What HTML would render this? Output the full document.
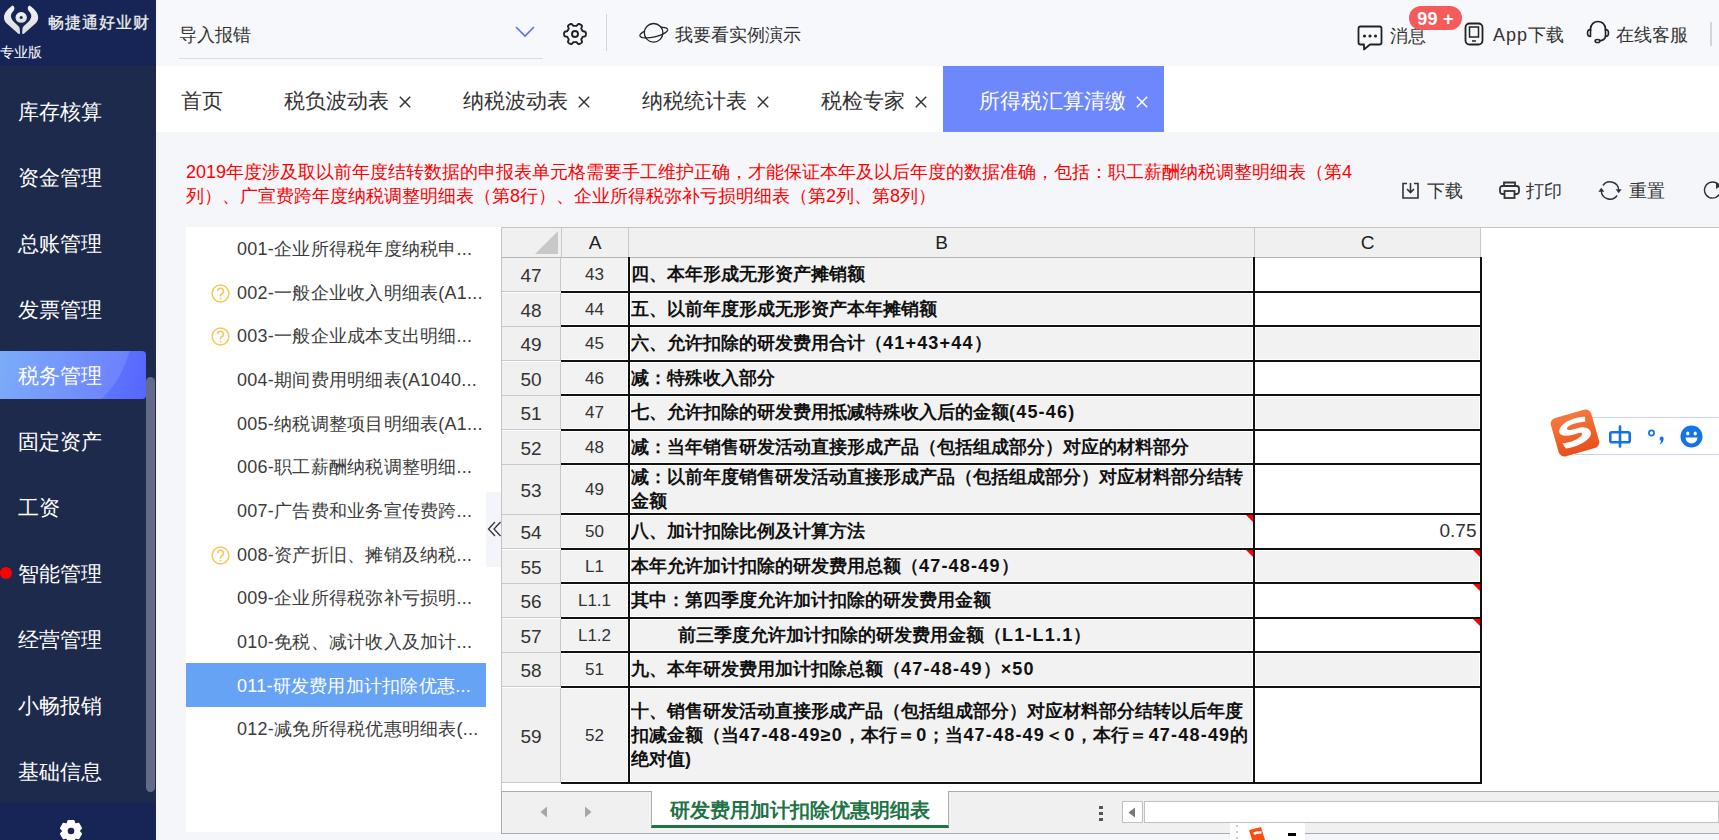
<!DOCTYPE html>
<html><head><meta charset="utf-8">
<style>
*{box-sizing:border-box;margin:0;padding:0}
html,body{width:1719px;height:840px;overflow:hidden;background:#f5f6fa;font-family:"Liberation Sans",sans-serif;color:#333;position:relative}
.abs{position:absolute}
#side{position:absolute;left:0;top:0;width:156px;height:840px;background:#1e2a4c}
#logo{position:absolute;left:0;top:0;width:156px;height:66px;background:#162555}
#sbot{position:absolute;left:0;top:803px;width:156px;height:37px;background:#162555}
.mi{position:absolute;left:18px;color:#fff;font-size:21px;line-height:24px;white-space:nowrap}
#top{position:absolute;left:157px;top:0;width:1562px;height:66px;background:#f7f8fc}
#tabs{position:absolute;left:156px;top:66px;width:1563px;height:66px;background:#fff}
.tab{position:absolute;top:0;height:66px;line-height:70px;font-size:21px;color:#333;white-space:nowrap}
.tx{font-size:18px;line-height:22px;white-space:nowrap;position:absolute;color:#333}
#notice{position:absolute;left:186px;top:160px;width:1190px;color:#f00;font-size:18px;line-height:24px}
#list{position:absolute;left:186px;top:227px;width:315px;height:605px;background:#fff}
.li{position:absolute;left:51px;font-size:18px;line-height:22px;color:#3c3c3c;white-space:nowrap;letter-spacing:0.25px}
.q{position:absolute;left:25px;width:18px;height:18px}
#sheet{position:absolute;left:501px;top:227px;width:1218px;height:606px;background:#fff;border-top:1px solid #c4c4c4;border-left:1px solid #c4c4c4}
#grid{position:absolute;left:0;top:0}#grid > *{position:absolute}
.hd{background:#f0f0f0;border-right:1px solid #c8c8c8;border-bottom:1px solid #b4b4b4}
.ch{text-align:center;font-size:19px;line-height:30px;color:#222}
.rh{left:502px;width:59px;background:#f0f0f0;text-align:center;font-size:19px;color:#333;border-right:1px solid #c8c8c8}
.ca{left:561px;width:67px;background:#f2f2f2;text-align:center;font-size:17px;color:#333}
.cb{left:628px;width:626px;background:#f2f2f2;display:flex;align-items:center}
.bt{padding-left:3px;font-size:18px;line-height:24px;font-weight:bold;color:#111;white-space:nowrap}
.cc{left:1254px;width:226.5px;text-align:right;padding-right:4px;font-size:19px;color:#333}
.hl{left:561px;width:920.5px;height:2px;background:#111}
.rl{left:502px;width:59px;height:1px;background:#c8c8c8}
.vl{top:257px;height:526px;width:2px;background:#111}
.n{letter-spacing:1.2px}
.hlw{left:562px;width:920.5px;height:4px;background:#fff}
.vlw{top:258px;height:524px;width:4px;background:#fff}

</style></head><body>
<div id="side">
  <div id="logo">
    <svg class="abs" style="left:0;top:0" width="45" height="40" viewBox="0 0 45 40"><defs><linearGradient id="lg" x1="0" y1="0" x2="0" y2="1"><stop offset="0" stop-color="#f4f4f6"/><stop offset="1" stop-color="#dcdce0"/></linearGradient></defs><path d="M12.6 5.5 C9 8 4 12 4 17.5 C4 21 6 23 9 25.5 L18.3 33.8 C19.3 34.6 20.2 33.8 20 32 L19.6 28 C19.2 26.5 17 25 14 22 C11.5 19.5 10.5 17 11 15 C11.5 13 13 11.5 14 10 C14.8 8.5 14.5 6 12.6 5.5Z" fill="url(#lg)"/><path d="M 29.6 5.5 C 33.2 8.0 38.2 12.0 38.2 17.5 C 38.2 21.0 36.2 23.0 33.2 25.5 L 23.9 33.8 C 22.9 34.6 22.0 33.8 22.2 32.0 L 22.6 28.0 C 23.0 26.5 25.2 25.0 28.2 22.0 C 30.7 19.5 31.7 17.0 31.2 15.0 C 30.7 13.0 29.2 11.5 28.2 10.0 C 27.4 8.5 27.7 6.0 29.6 5.5 Z" fill="url(#lg)"/><ellipse cx="21.2" cy="17.4" rx="5.7" ry="5.3" fill="url(#lg)"/><circle cx="21.2" cy="17.4" r="1.5" fill="#162555"/></svg>
    <div class="abs" style="left:48px;top:13px;color:#eee;font-size:16px;line-height:20px;letter-spacing:1px;-webkit-text-stroke:0.3px #eee">畅捷通好业财</div>
    <div class="abs" style="left:0;top:44px;color:#fff;font-size:14px;line-height:16px">专业版</div>
  </div>
  <div class="mi" style="top:100px">库存核算</div>
  <div class="mi" style="top:166px">资金管理</div>
  <div class="mi" style="top:232px">总账管理</div>
  <div class="mi" style="top:298px">发票管理</div>
  <div class="abs" style="left:0;top:351px;width:146px;height:48px;border-radius:0 4px 4px 0;overflow:hidden;background:linear-gradient(100deg,#6aa2f8 0%,#5f80fd 55%,#5766ff 100%)">
    <div class="abs" style="left:-73px;top:-129px;width:206px;height:206px;border-radius:50%;background:rgba(255,255,255,0.12)"></div>
  </div>
  <div class="mi" style="top:364px">税务管理</div>
  <div class="mi" style="top:430px">固定资产</div>
  <div class="mi" style="top:496px">工资</div>
  <div class="abs" style="left:0;top:567px;width:12px;height:12px;border-radius:50%;background:#f00"></div>
  <div class="mi" style="top:562px">智能管理</div>
  <div class="mi" style="top:628px">经营管理</div>
  <div class="mi" style="top:694px">小畅报销</div>
  <div class="mi" style="top:760px">基础信息</div>
  <div class="abs" style="left:146px;top:377px;width:9px;height:415px;border-radius:5px;background:#646b86"></div>
  <div id="sbot">
    <svg class="abs" style="left:58.5px;top:15.5px" width="24" height="24" viewBox="0 0 24 24"><path fill="#fff" stroke="#fff" stroke-width="1.6" stroke-linejoin="round" fill-rule="evenodd" d="M9.27 1.76 L14.73 1.76 L15.84 4.98 L16.16 5.17 L19.51 4.52 L22.23 9.24 L20.00 11.81 L20.00 12.19 L22.23 14.76 L19.51 19.48 L16.16 18.83 L15.84 19.02 L14.73 22.24 L9.27 22.24 L8.16 19.02 L7.84 18.83 L4.49 19.48 L1.77 14.76 L4.00 12.19 L4.00 11.81 L1.77 9.24 L4.49 4.52 L7.84 5.17 L8.16 4.98Z"/><circle cx="12" cy="12" r="3.3" fill="#162555"/></svg>
  </div>
</div>
<div id="top">
  <div class="tx" style="left:22px;top:24px">导入报错</div>
  <div class="abs" style="left:22px;top:58px;width:364px;height:1px;background:#dcdcdc"></div>
  <svg class="abs" style="left:358px;top:26px" width="20" height="12" viewBox="0 0 20 12"><path d="M1 1 L10 10 L19 1" fill="none" stroke="#5c6cfa" stroke-width="1.6"/></svg>
  <svg class="abs" style="left:406px;top:22px" width="24" height="24" viewBox="0 0 24 24"><path fill="none" stroke="#222" stroke-width="1.9" stroke-linejoin="round" d="M22.90 12.00 L22.89 12.48 L22.85 12.95 L22.76 13.42 L22.59 13.87 L22.13 14.25 L21.18 14.46 L20.23 14.59 L19.75 14.82 L19.52 15.12 L19.35 15.43 L19.19 15.74 L19.01 16.05 L18.83 16.35 L18.64 16.65 L18.46 16.96 L18.32 17.30 L18.36 17.83 L18.72 18.72 L19.01 19.65 L18.91 20.23 L18.61 20.61 L18.25 20.92 L17.86 21.19 L17.45 21.44 L17.03 21.67 L16.60 21.87 L16.16 22.03 L15.68 22.10 L15.12 21.89 L14.46 21.18 L13.87 20.42 L13.43 20.13 L13.06 20.07 L12.71 20.08 L12.35 20.09 L12.00 20.10 L11.65 20.09 L11.29 20.08 L10.94 20.07 L10.57 20.13 L10.13 20.42 L9.54 21.18 L8.88 21.89 L8.32 22.10 L7.84 22.03 L7.40 21.87 L6.97 21.67 L6.55 21.44 L6.14 21.19 L5.75 20.92 L5.39 20.61 L5.09 20.23 L4.99 19.65 L5.28 18.72 L5.64 17.83 L5.68 17.30 L5.54 16.96 L5.36 16.65 L5.17 16.35 L4.99 16.05 L4.81 15.74 L4.65 15.43 L4.48 15.12 L4.25 14.82 L3.77 14.59 L2.82 14.46 L1.87 14.25 L1.41 13.87 L1.24 13.42 L1.15 12.95 L1.11 12.48 L1.10 12.00 L1.11 11.52 L1.15 11.05 L1.24 10.58 L1.41 10.13 L1.87 9.75 L2.82 9.54 L3.77 9.41 L4.25 9.18 L4.48 8.88 L4.65 8.57 L4.81 8.26 L4.99 7.95 L5.17 7.65 L5.36 7.35 L5.54 7.04 L5.68 6.70 L5.64 6.17 L5.28 5.28 L4.99 4.35 L5.09 3.77 L5.39 3.39 L5.75 3.08 L6.14 2.81 L6.55 2.56 L6.97 2.33 L7.40 2.13 L7.84 1.97 L8.32 1.90 L8.88 2.11 L9.54 2.82 L10.13 3.58 L10.57 3.87 L10.94 3.93 L11.29 3.92 L11.65 3.91 L12.00 3.90 L12.35 3.91 L12.71 3.92 L13.06 3.93 L13.43 3.87 L13.87 3.58 L14.46 2.82 L15.12 2.11 L15.68 1.90 L16.16 1.97 L16.60 2.13 L17.03 2.33 L17.45 2.56 L17.86 2.81 L18.25 3.08 L18.61 3.39 L18.91 3.77 L19.01 4.35 L18.72 5.28 L18.36 6.17 L18.32 6.70 L18.46 7.04 L18.64 7.35 L18.83 7.65 L19.01 7.95 L19.19 8.26 L19.35 8.57 L19.52 8.88 L19.75 9.18 L20.23 9.41 L21.18 9.54 L22.13 9.75 L22.59 10.13 L22.76 10.58 L22.85 11.05 L22.89 11.52Z"/><circle cx="12" cy="12" r="3.0" fill="none" stroke="#222" stroke-width="1.9"/></svg>
  <div class="abs" style="left:449px;top:14px;width:1px;height:37px;background:#d4d4d4"></div>
  <svg class="abs" style="left:481px;top:20px" width="32" height="26" viewBox="0 0 32 26"><defs><mask id="pm"><rect width="32" height="26" fill="#fff"/><circle cx="15.6" cy="12.8" r="9.3" fill="#000"/></mask></defs><circle cx="15.6" cy="12.8" r="9.3" fill="none" stroke="#222" stroke-width="1.3"/><g transform="rotate(-13 15.8 12.6)"><path d="M1.6 12.6A14.2 4.4 0 0 0 30 12.6" fill="none" stroke="#222" stroke-width="1.3"/><path d="M1.6 12.6A14.2 4.4 0 0 1 30 12.6" fill="none" stroke="#222" stroke-width="1.3" mask="url(#pm)"/></g></svg>
  <div class="tx" style="left:518px;top:24px">我要看实例演示</div>
  <svg class="abs" style="left:1200px;top:25px" width="26" height="26" viewBox="0 0 26 26"><path d="M3.5 1.5H22.5Q24.5 1.5 24.5 3.5V17.5Q24.5 19.5 22.5 19.5H13L7 24.5V19.5H3.5Q1.5 19.5 1.5 17.5V3.5Q1.5 1.5 3.5 1.5Z" fill="none" stroke="#222" stroke-width="1.8" stroke-linejoin="round"/><circle cx="7.5" cy="11" r="1.6" fill="#222"/><circle cx="13" cy="11" r="1.6" fill="#222"/><circle cx="18.5" cy="11" r="1.6" fill="#222"/></svg>
  <div class="tx" style="left:1233px;top:25px">消息</div>
  <div class="abs" style="left:1252px;top:6px;width:53px;height:24px;border-radius:12px;background:#f55b5b;color:#fff;font-weight:bold;font-size:18px;line-height:26px;text-align:center;letter-spacing:0.3px">99 +</div>
  <svg class="abs" style="left:1307px;top:22px" width="20" height="24" viewBox="0 0 20 24"><rect x="1.5" y="1.5" width="17" height="21" rx="4" fill="none" stroke="#222" stroke-width="1.8"/><rect x="5.5" y="5" width="9" height="10" fill="none" stroke="#222" stroke-width="1.5"/><path d="M8 19h4" stroke="#222" stroke-width="1.5"/></svg>
  <div class="tx" style="left:1336px;top:24px"><span style="letter-spacing:1px">App</span>下载</div>
  <svg class="abs" style="left:1429px;top:19px" width="24" height="26" viewBox="0 0 24 26"><path d="M4.5 12V10A7.5 7.5 0 0 1 19.5 10V12" fill="none" stroke="#222" stroke-width="1.7"/><path d="M4.5 10.5A3 3.5 0 0 0 4.5 17.5Z" fill="none" stroke="#222" stroke-width="1.6" stroke-linejoin="round"/><path d="M19.5 10.5A3 3.5 0 0 1 19.5 17.5Z" fill="none" stroke="#222" stroke-width="1.6" stroke-linejoin="round"/><path d="M19.5 17.5C19 20 16.5 21.5 13.5 21.8" fill="none" stroke="#222" stroke-width="1.6"/><ellipse cx="11.5" cy="22" rx="2.4" ry="1.6" fill="none" stroke="#222" stroke-width="1.5"/></svg>
  <div class="tx" style="left:1459px;top:24px">在线客服</div>
  <div class="abs" style="left:1553px;top:22px;width:2px;height:24px;background:#d4d4d4"></div>
</div>
<div id="tabs">
  <div class="tab" style="left:25px">首页</div>
  <div class="tab" style="left:128px">税负波动表</div>
  <div class="tab" style="left:307px">纳税波动表</div>
  <div class="tab" style="left:486px">纳税统计表</div>
  <div class="tab" style="left:665px">税检专家</div>
  <div class="abs" style="left:787px;top:0;width:221px;height:66px;background:#6d88fc"></div>
  <div class="tab" style="left:823px;color:#fff">所得税汇算清缴</div>
  <svg class="abs" style="left:243px;top:30px" width="12" height="12" viewBox="0 0 12 12"><path d="M0.8 0.8L11.2 11.2M11.2 0.8L0.8 11.2" stroke="#333" stroke-width="1.5"/></svg><svg class="abs" style="left:422px;top:30px" width="12" height="12" viewBox="0 0 12 12"><path d="M0.8 0.8L11.2 11.2M11.2 0.8L0.8 11.2" stroke="#333" stroke-width="1.5"/></svg><svg class="abs" style="left:601px;top:30px" width="12" height="12" viewBox="0 0 12 12"><path d="M0.8 0.8L11.2 11.2M11.2 0.8L0.8 11.2" stroke="#333" stroke-width="1.5"/></svg><svg class="abs" style="left:759px;top:30px" width="12" height="12" viewBox="0 0 12 12"><path d="M0.8 0.8L11.2 11.2M11.2 0.8L0.8 11.2" stroke="#333" stroke-width="1.5"/></svg><svg class="abs" style="left:980px;top:30px" width="12" height="12" viewBox="0 0 12 12"><path d="M0.8 0.8L11.2 11.2M11.2 0.8L0.8 11.2" stroke="#fff" stroke-width="1.5"/></svg>
</div>
<div id="notice">2019年度涉及取以前年度结转数据的申报表单元格需要手工维护正确，才能保证本年及以后年度的数据准确，包括：职工薪酬纳税调整明细表（第4列）、广宣费跨年度纳税调整明细表（第8行）、企业所得税弥补亏损明细表（第2列、第8列）</div>
<svg class="abs" style="left:1402px;top:182px" width="17" height="17" viewBox="0 0 17 17"><path d="M5 1.5H1v14.5h15V1.5h-4" fill="none" stroke="#333" stroke-width="1.6"/><path d="M8.5 1v9M5 7l3.5 3.5L12 7" fill="none" stroke="#333" stroke-width="1.6"/></svg>
<svg class="abs" style="left:1499px;top:181px" width="21" height="18" viewBox="0 0 21 18"><path d="M5 5V1.5h11V5" fill="none" stroke="#333" stroke-width="1.8"/><path d="M5 13H3.5A2.5 2.5 0 0 1 1 10.5V7.5A2.5 2.5 0 0 1 3.5 5h14A2.5 2.5 0 0 1 20 7.5v3A2.5 2.5 0 0 1 17.5 13H16" fill="none" stroke="#333" stroke-width="1.8"/><rect x="5.5" y="10" width="10" height="7" fill="none" stroke="#333" stroke-width="1.8"/></svg>
<svg class="abs" style="left:1598px;top:181px" width="24" height="20" viewBox="0 0 24 20"><path d="M4.9 4.5A8.7 8.7 0 0 1 20.7 9.5" fill="none" stroke="#333" stroke-width="1.4"/><path d="M19.1 14.5A8.7 8.7 0 0 1 3.3 9.5" fill="none" stroke="#333" stroke-width="1.4"/><path d="M17.7 8.3H23.7L20.7 12.3z" fill="#333"/><path d="M0.3 10.7H6.3L3.3 6.7z" fill="#333"/></svg>
<svg class="abs" style="left:1702px;top:181px" width="22" height="20" viewBox="0 0 22 20"><path d="M18.2 7A8 8 0 1 1 14.5 2.2" fill="none" stroke="#333" stroke-width="1.4"/><path d="M14 0.8L19.5 4.5 14 8z" fill="#333"/></svg>
<div class="tx" style="left:1427px;top:180px">下载</div>
<div class="tx" style="left:1526px;top:180px">打印</div>
<div class="tx" style="left:1629px;top:180px">重置</div>
<div id="list">
  <div class="li" style="top:11px">001-企业所得税年度纳税申...</div>
  <svg class="abs" style="left:25px;top:57px" width="19" height="19" viewBox="0 0 19 19"><circle cx="9.5" cy="9.5" r="8.4" fill="none" stroke="#f5c85a" stroke-width="1.5"/><path d="M6.6 7.2A2.9 2.9 0 1 1 10.3 10C9.6 10.4 9.5 10.9 9.5 11.8V12.5" fill="none" stroke="#f5c85a" stroke-width="1.5"/><circle cx="9.5" cy="14.6" r="0.95" fill="#f5c85a"/></svg><div class="li" style="top:55px">002-一般企业收入明细表(A1...</div>
  <svg class="abs" style="left:25px;top:100px" width="19" height="19" viewBox="0 0 19 19"><circle cx="9.5" cy="9.5" r="8.4" fill="none" stroke="#f5c85a" stroke-width="1.5"/><path d="M6.6 7.2A2.9 2.9 0 1 1 10.3 10C9.6 10.4 9.5 10.9 9.5 11.8V12.5" fill="none" stroke="#f5c85a" stroke-width="1.5"/><circle cx="9.5" cy="14.6" r="0.95" fill="#f5c85a"/></svg><div class="li" style="top:98px">003-一般企业成本支出明细...</div>
  <div class="li" style="top:142px">004-期间费用明细表(A1040...</div>
  <div class="li" style="top:186px">005-纳税调整项目明细表(A1...</div>
  <div class="li" style="top:229px">006-职工薪酬纳税调整明细...</div>
  <div class="li" style="top:273px">007-广告费和业务宣传费跨...</div>
  <svg class="abs" style="left:25px;top:319px" width="19" height="19" viewBox="0 0 19 19"><circle cx="9.5" cy="9.5" r="8.4" fill="none" stroke="#f5c85a" stroke-width="1.5"/><path d="M6.6 7.2A2.9 2.9 0 1 1 10.3 10C9.6 10.4 9.5 10.9 9.5 11.8V12.5" fill="none" stroke="#f5c85a" stroke-width="1.5"/><circle cx="9.5" cy="14.6" r="0.95" fill="#f5c85a"/></svg><div class="li" style="top:317px">008-资产折旧、摊销及纳税...</div>
  <div class="li" style="top:360px">009-企业所得税弥补亏损明...</div>
  <div class="li" style="top:404px">010-免税、减计收入及加计...</div>
  <div class="abs" style="left:0;top:436px;width:300px;height:44px;background:#66a3f5"></div>
  <div class="li" style="top:448px;color:#fff">011-研发费用加计扣除优惠...</div>
  <div class="li" style="top:491px">012-减免所得税优惠明细表(...</div>
</div>
<div class="abs" style="left:486px;top:492px;width:15px;height:75px;background:#f3f5fa"></div><svg class="abs" style="left:487px;top:521px" width="14" height="16" viewBox="0 0 14 16"><path d="M8 1L1.5 8L8 15M13.5 1L7 8L13.5 15" fill="none" stroke="#333" stroke-width="1.3"/></svg>
<div id="sheet"></div>
<div id="grid"><div class="rh" style="top:258px;height:33.5px;line-height:35.5px">47</div>
<div class="ca" style="top:257px;height:34.5px;line-height:36.5px">43</div>
<div class="cb" style="top:257px;height:34.5px"><div class="bt">四、本年形成无形资产摊销额</div></div>
<div class="cc" style="top:257px;height:34.5px;line-height:34.5px;background:#fff"></div>
<div class="rh" style="top:292.5px;height:33.5px;line-height:35.5px">48</div>
<div class="ca" style="top:291.5px;height:34.5px;line-height:36.5px">44</div>
<div class="cb" style="top:291.5px;height:34.5px"><div class="bt">五、以前年度形成无形资产本年摊销额</div></div>
<div class="cc" style="top:291.5px;height:34.5px;line-height:34.5px;background:#fff"></div>
<div class="rh" style="top:327px;height:33.5px;line-height:35.5px">49</div>
<div class="ca" style="top:326px;height:34.5px;line-height:36.5px">45</div>
<div class="cb" style="top:326px;height:34.5px"><div class="bt">六、允许扣除的研发费用合计（<span class="n">41+43+44</span>）</div></div>
<div class="cc" style="top:326px;height:34.5px;line-height:34.5px;background:#f2f2f2"></div>
<div class="rh" style="top:361.5px;height:33.5px;line-height:35.5px">50</div>
<div class="ca" style="top:360.5px;height:34.5px;line-height:36.5px">46</div>
<div class="cb" style="top:360.5px;height:34.5px"><div class="bt">减：特殊收入部分</div></div>
<div class="cc" style="top:360.5px;height:34.5px;line-height:34.5px;background:#fff"></div>
<div class="rh" style="top:396px;height:33.5px;line-height:35.5px">51</div>
<div class="ca" style="top:395px;height:34.5px;line-height:36.5px">47</div>
<div class="cb" style="top:395px;height:34.5px"><div class="bt">七、允许扣除的研发费用抵减特殊收入后的金额<span class="n">(45-46)</span></div></div>
<div class="cc" style="top:395px;height:34.5px;line-height:34.5px;background:#f2f2f2"></div>
<div class="rh" style="top:430.5px;height:33.5px;line-height:35.5px">52</div>
<div class="ca" style="top:429.5px;height:34.5px;line-height:36.5px">48</div>
<div class="cb" style="top:429.5px;height:34.5px"><div class="bt">减：当年销售研发活动直接形成产品（包括组成部分）对应的材料部分</div></div>
<div class="cc" style="top:429.5px;height:34.5px;line-height:34.5px;background:#fff"></div>
<div class="rh" style="top:465px;height:49px;line-height:51px">53</div>
<div class="ca" style="top:464px;height:50px;line-height:52px">49</div>
<div class="cb" style="top:464px;height:50px"><div class="bt">减：以前年度销售研发活动直接形成产品（包括组成部分）对应材料部分结转<br>金额</div></div>
<div class="cc" style="top:464px;height:50px;line-height:50px;background:#fff"></div>
<div class="rh" style="top:515px;height:33.5px;line-height:35.5px">54</div>
<div class="ca" style="top:514px;height:34.5px;line-height:36.5px">50</div>
<div class="cb" style="top:514px;height:34.5px"><div class="bt">八、加计扣除比例及计算方法</div></div>
<div class="cc" style="top:514px;height:34.5px;line-height:34.5px;background:#fff">0.75</div>
<div class="rh" style="top:549.5px;height:33.5px;line-height:35.5px">55</div>
<div class="ca" style="top:548.5px;height:34.5px;line-height:36.5px">L1</div>
<div class="cb" style="top:548.5px;height:34.5px"><div class="bt">本年允许加计扣除的研发费用总额（<span class="n">47-48-49</span>）</div></div>
<div class="cc" style="top:548.5px;height:34.5px;line-height:34.5px;background:#f2f2f2"></div>
<div class="rh" style="top:584px;height:33.5px;line-height:35.5px">56</div>
<div class="ca" style="top:583px;height:34.5px;line-height:36.5px">L1.1</div>
<div class="cb" style="top:583px;height:34.5px"><div class="bt">其中：第四季度允许加计扣除的研发费用金额</div></div>
<div class="cc" style="top:583px;height:34.5px;line-height:34.5px;background:#fff"></div>
<div class="rh" style="top:618.5px;height:33.5px;line-height:35.5px">57</div>
<div class="ca" style="top:617.5px;height:34.5px;line-height:36.5px">L1.2</div>
<div class="cb" style="top:617.5px;height:34.5px"><div class="bt" style="padding-left:50px">前三季度允许加计扣除的研发费用金额（<span class="n">L1-L1.1</span>）</div></div>
<div class="cc" style="top:617.5px;height:34.5px;line-height:34.5px;background:#fff"></div>
<div class="rh" style="top:653px;height:33.5px;line-height:35.5px">58</div>
<div class="ca" style="top:652px;height:34.5px;line-height:36.5px">51</div>
<div class="cb" style="top:652px;height:34.5px"><div class="bt">九、本年研发费用加计扣除总额（<span class="n">47-48-49</span>）<span class="n">×50</span></div></div>
<div class="cc" style="top:652px;height:34.5px;line-height:34.5px;background:#f2f2f2"></div>
<div class="rh" style="top:687.5px;height:95.0px;line-height:97.0px">59</div>
<div class="ca" style="top:686.5px;height:96.0px;line-height:98.0px">52</div>
<div class="cb" style="top:686.5px;height:96.0px"><div class="bt">十、销售研发活动直接形成产品（包括组成部分）对应材料部分结转以后年度<br>扣减金额（当<span class="n">47-48-49≥0</span>，本行<span class="n">＝0</span>；当<span class="n">47-48-49＜0</span>，本行<span class="n">＝47-48-49</span>的<br>绝对值<span class="n">)</span></div></div>
<div class="cc" style="top:686.5px;height:96.0px;line-height:96.0px;background:#fff"></div>
<div class="hd" style="left:502px;top:228px;width:60px;height:30px"></div>
<svg class="abs" style="left:535px;top:231px" width="23" height="23"><polygon points="23,0 23,23 0,23" fill="#c8c8c8"/></svg>
<div class="hd ch" style="left:562px;top:228px;width:67px;height:30px">A</div>
<div class="hd ch" style="left:629px;top:228px;width:626px;height:30px">B</div>
<div class="hd ch" style="left:1255px;top:228px;width:226px;height:30px">C</div>
<div class="hlw" style="top:289.5px"></div>
<div class="hlw" style="top:324px"></div>
<div class="hlw" style="top:358.5px"></div>
<div class="hlw" style="top:393px"></div>
<div class="hlw" style="top:427.5px"></div>
<div class="hlw" style="top:462px"></div>
<div class="hlw" style="top:512px"></div>
<div class="hlw" style="top:546.5px"></div>
<div class="hlw" style="top:581px"></div>
<div class="hlw" style="top:615.5px"></div>
<div class="hlw" style="top:650px"></div>
<div class="hlw" style="top:684.5px"></div>
<div class="hlw" style="top:780.5px"></div>
<div class="vlw" style="left:627px"></div>
<div class="vlw" style="left:1252px"></div>
<div class="vlw" style="left:1479px"></div>
<div class="hl" style="top:290.5px"></div>
<div class="rl" style="top:291.0px"></div>
<div class="hl" style="top:325px"></div>
<div class="rl" style="top:325.5px"></div>
<div class="hl" style="top:359.5px"></div>
<div class="rl" style="top:360.0px"></div>
<div class="hl" style="top:394px"></div>
<div class="rl" style="top:394.5px"></div>
<div class="hl" style="top:428.5px"></div>
<div class="rl" style="top:429.0px"></div>
<div class="hl" style="top:463px"></div>
<div class="rl" style="top:463.5px"></div>
<div class="hl" style="top:513px"></div>
<div class="rl" style="top:513.5px"></div>
<div class="hl" style="top:547.5px"></div>
<div class="rl" style="top:548.0px"></div>
<div class="hl" style="top:582px"></div>
<div class="rl" style="top:582.5px"></div>
<div class="hl" style="top:616.5px"></div>
<div class="rl" style="top:617.0px"></div>
<div class="hl" style="top:651px"></div>
<div class="rl" style="top:651.5px"></div>
<div class="hl" style="top:685.5px"></div>
<div class="rl" style="top:686.0px"></div>
<div class="hl" style="top:781.5px"></div>
<div class="rl" style="top:782.0px"></div>
<div class="vl" style="left:628px"></div>
<div class="vl" style="left:1253px"></div>
<div class="vl" style="left:1480px"></div>
<svg class="abs" style="left:1246px;top:515px" width="7" height="7"><polygon points="0,0 7,0 7,7" fill="#f00"/></svg>
<svg class="abs" style="left:1246px;top:549.5px" width="7" height="7"><polygon points="0,0 7,0 7,7" fill="#f00"/></svg>
<svg class="abs" style="left:1472.5px;top:549.5px" width="7" height="7"><polygon points="0,0 7,0 7,7" fill="#f00"/></svg>
<svg class="abs" style="left:1472.5px;top:584px" width="7" height="7"><polygon points="0,0 7,0 7,7" fill="#f00"/></svg>
<svg class="abs" style="left:1472.5px;top:618.5px" width="7" height="7"><polygon points="0,0 7,0 7,7" fill="#f00"/></svg></div>
<div class="abs" style="left:501px;top:791px;width:1218px;height:43px;background:#f0f0f0;border-top:1px solid #ababab;border-bottom:1px solid #ababab;border-left:1px solid #ababab"></div>
<svg class="abs" style="left:540px;top:806px" width="8" height="12" viewBox="0 0 8 12"><path d="M7 0.5V11.5L0.5 6z" fill="#a6a6a6"/></svg>
<svg class="abs" style="left:584px;top:806px" width="8" height="12" viewBox="0 0 8 12"><path d="M1 0.5V11.5L7.5 6z" fill="#a6a6a6"/></svg>
<div class="abs" style="left:651px;top:791px;width:298px;height:37px;background:#fff;border-left:1px solid #ababab;border-right:1px solid #ababab;border-bottom:3px solid #217346"></div>
<div class="abs" style="left:651px;top:798px;width:298px;text-align:center;font-size:20px;line-height:24px;font-weight:bold;color:#217346;white-space:nowrap">研发费用加计扣除优惠明细表</div>
<div class="abs" style="left:1099px;top:806px;width:3.5px;height:3px;background:#555"></div>
<div class="abs" style="left:1099px;top:812px;width:3.5px;height:3px;background:#555"></div>
<div class="abs" style="left:1099px;top:818px;width:3.5px;height:3px;background:#555"></div>
<div class="abs" style="left:1122px;top:801px;width:21px;height:22px;background:#fff;border:1px solid #c0c0c0"></div>
<svg class="abs" style="left:1128px;top:807px" width="8" height="11" viewBox="0 0 8 11"><path d="M7 0.5V10.5L0.5 5.5z" fill="#777"/></svg>
<div class="abs" style="left:1144px;top:801px;width:575px;height:22px;background:#fff;border:1px solid #c0c0c0"></div>
<div class="abs" style="left:1230px;top:823px;width:75px;height:17px;background:#fff"></div>
<div class="abs" style="left:1236px;top:825px;width:2px;height:2px;background:#ccc"></div>
<div class="abs" style="left:1236px;top:831px;width:2px;height:2px;background:#ccc"></div>
<div class="abs" style="left:1236px;top:837px;width:2px;height:2px;background:#ccc"></div>
<svg class="abs" style="left:1247px;top:826px" width="26" height="14" viewBox="0 0 26 14"><path d="M2 4L14 1L18 14H5z" fill="#ff4d10"/><path d="M6 7C8 5 12 5 15 5.5L14 8C12 7.6 9 8 8 9Z" fill="#fff"/></svg>
<div class="abs" style="left:1288px;top:833px;width:8px;height:3px;background:#000"></div>
<!-- sogou IME bar -->
<div class="abs" style="left:1575px;top:417px;width:150px;height:38px;background:#fff;border:1px solid #c5d2e6;border-right:none"></div>
<svg class="abs" style="left:1550px;top:408px" width="50" height="50" viewBox="0 0 50 50"><defs><linearGradient id="og" x1="0" y1="0" x2="0" y2="1"><stop offset="0" stop-color="#f47a3f"/><stop offset="1" stop-color="#e9501a"/></linearGradient></defs><g transform="rotate(-16 25 25)"><rect x="4" y="5" width="42" height="40" rx="6" fill="url(#og)"/><path d="M39 12C30 9.5 14 10.5 10.5 18.5C8 24.5 19 27 27.5 26C32 25.5 33.5 28 29 30C23.5 32.5 15 32.5 10 31.5L12 37.5C21 39 32 37.5 38 33C43.5 28.5 39 21 29.5 21C23 21 17.5 21 18.5 18.5C19.5 15.5 30 15 38 17z" fill="#fff"/></g></svg>
<svg class="abs" style="left:1606px;top:424px" width="28" height="25" viewBox="0 0 28 25"><rect x="4.3" y="8.3" width="19.4" height="10" rx="1.5" fill="none" stroke="#1473e6" stroke-width="2.6"/><path d="M14 2.5V22.5" stroke="#1473e6" stroke-width="2.6" stroke-linecap="round"/></svg>
<svg class="abs" style="left:1645px;top:427px" width="22" height="20" viewBox="0 0 22 20"><circle cx="6.5" cy="6" r="2.6" fill="none" stroke="#1473e6" stroke-width="1.7"/><path d="M16.5 9.5C18.5 9.5 19 11 18.5 13C18 15 16.5 16.8 14.5 17.8C15.8 16 16 14.5 15.8 13.6C14.3 13.2 14 10 16.5 9.5z" fill="#1473e6"/></svg>
<svg class="abs" style="left:1680px;top:425px" width="23" height="23" viewBox="0 0 23 23"><circle cx="11.5" cy="11.5" r="11" fill="#1473e6"/><ellipse cx="7.8" cy="8.5" rx="1.6" ry="2" fill="#fff"/><ellipse cx="15.2" cy="8.5" rx="1.6" ry="2" fill="#fff"/><path d="M5.5 12.5H17.5A6 6 0 0 1 5.5 12.5z" fill="#fff"/></svg>

</body></html>
